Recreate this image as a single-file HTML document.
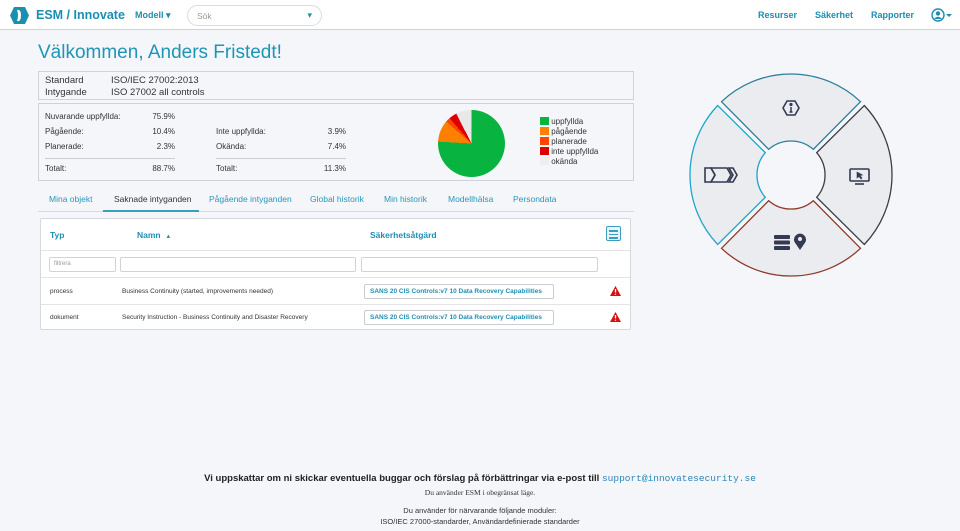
<!DOCTYPE html>
<html><head><meta charset="utf-8"><style>
*{box-sizing:border-box;margin:0;padding:0}
body{width:960px;height:531px;overflow:hidden;background:#f5f6fa;font-family:"Liberation Sans",sans-serif;color:#333;position:relative}
.abs{position:absolute}
.hdr{position:absolute;left:0;top:0;width:960px;height:30px;background:#fff;border-bottom:1px solid #cfd2d8}
.teal{color:#1a8fb0}
.box{position:absolute;border:1px solid #cfd2d8;background:#f5f6fa}
.s{font-size:8px;color:#333}
.tab{position:absolute;top:194px;font-size:8.5px;color:#2a96b8}
.card{position:absolute;left:40px;top:218px;width:591px;height:112px;background:#fff;border:1px solid #d6d9de;border-radius:2px}
.row{position:absolute;left:0;width:100%;border-top:1px solid #e2e4e8}
.in{position:absolute;height:15px;border:1px solid #d0d3d8;border-radius:2px;background:#fff}
.btn{position:absolute;left:323px;width:190px;height:15px;border:1px solid #c9cdd3;border-radius:2px;font-size:6.5px;font-weight:bold;color:#1f8fb2;line-height:13px;padding-left:5px}
.warn{position:absolute;left:569px;width:11px;height:10px}
</style></head><body>
<div class="hdr">
  <svg class="abs" style="left:10px;top:7px" width="19" height="17" viewBox="0 0 19 17"><path d="M4 0 H15 L19 8.5 L15 17 H4 L0 8.5 Z" fill="#1a8fb0"/><path d="M7 3 Q11 2 11 8.5 Q11 15 7 14 Q9 8.5 7 3Z" fill="#fff"/></svg>
  <div class="abs teal" style="left:36px;top:8px;font-size:12.5px;font-weight:bold">ESM / Innovate</div>
  <div class="abs teal" style="left:135px;top:10px;font-size:9px;font-weight:bold">Modell ▾</div>
  <div class="abs" style="left:187px;top:5px;width:135px;height:21px;border:1px solid #d9dce0;border-radius:11px;background:#fff"><span style="position:absolute;left:9px;top:5px;font-size:8.5px;color:#999">Sök</span><span style="position:absolute;right:9px;top:4px;font-size:9px;color:#1a8fb0">▾</span></div>
  <div class="abs teal" style="left:758px;top:10px;font-size:9px;font-weight:bold">Resurser</div>
  <div class="abs teal" style="left:815px;top:10px;font-size:9px;font-weight:bold">Säkerhet</div>
  <div class="abs teal" style="left:871px;top:10px;font-size:9px;font-weight:bold">Rapporter</div>
  <svg class="abs" style="left:931px;top:8px" width="22" height="14" viewBox="0 0 22 14"><circle cx="7" cy="7" r="6" fill="none" stroke="#1a8fb0" stroke-width="1.4"/><circle cx="7" cy="5.5" r="2.2" fill="#1a8fb0"/><path d="M3 11 Q7 6.5 11 11" fill="#1a8fb0"/><path d="M15 6 H21 L18 9Z" fill="#1a8fb0"/></svg>
</div>
<div class="abs" style="left:38px;top:42px;font-size:19px;color:#1d96b5">Välkommen, Anders Fristedt!</div>
<div class="box" style="left:38px;top:71px;width:596px;height:29px">
  <div class="abs" style="left:6px;top:3px;font-size:9.5px;line-height:11.5px">Standard<br>Intygande</div>
  <div class="abs" style="left:72px;top:3px;font-size:9.5px;line-height:11.5px">ISO/IEC 27002:2013<br>ISO 27002 all controls</div>
</div>
<div class="box" style="left:38px;top:103px;width:596px;height:78px">
  <div class="abs s" style="left:6px;top:8px">Nuvarande uppfyllda:</div><div class="abs s" style="left:108px;top:8px;width:28px;text-align:right">75.9%</div>
  <div class="abs s" style="left:6px;top:23px">Pågående:</div><div class="abs s" style="left:108px;top:23px;width:28px;text-align:right">10.4%</div>
  <div class="abs s" style="left:6px;top:38px">Planerade:</div><div class="abs s" style="left:108px;top:38px;width:28px;text-align:right">2.3%</div>
  <div class="abs" style="left:6px;top:54px;width:130px;border-top:1px solid #ccc"></div>
  <div class="abs s" style="left:6px;top:60px">Totalt:</div><div class="abs s" style="left:108px;top:60px;width:28px;text-align:right">88.7%</div>
  <div class="abs s" style="left:177px;top:23px">Inte uppfyllda:</div><div class="abs s" style="left:265px;top:23px;width:42px;text-align:right">3.9%</div>
  <div class="abs s" style="left:177px;top:38px">Okända:</div><div class="abs s" style="left:265px;top:38px;width:42px;text-align:right">7.4%</div>
  <div class="abs" style="left:177px;top:54px;width:130px;border-top:1px solid #ccc"></div>
  <div class="abs s" style="left:177px;top:60px">Totalt:</div><div class="abs s" style="left:265px;top:60px;width:42px;text-align:right">11.3%</div>
  <div class="abs" style="left:399px;top:6px;width:67px;height:67px;border-radius:50%;background:conic-gradient(#08b43f 0 75.9%,#ff8000 75.9% 86.3%,#ff4500 86.3% 88.6%,#dd0000 88.6% 92.5%,#e8e8e8 92.5% 100%)"></div>
  <div class="abs" style="left:501px;top:13px;font-size:8px;line-height:10px">
    <div><span style="display:inline-block;width:9px;height:8px;background:#08b43f;vertical-align:-1px"></span> uppfyllda</div>
    <div><span style="display:inline-block;width:9px;height:8px;background:#ff8000;vertical-align:-1px"></span> pågående</div>
    <div><span style="display:inline-block;width:9px;height:8px;background:#ff4500;vertical-align:-1px"></span> planerade</div>
    <div><span style="display:inline-block;width:9px;height:8px;background:#dd0000;vertical-align:-1px"></span> inte uppfyllda</div>
    <div><span style="display:inline-block;width:9px;height:8px;background:#eee;vertical-align:-1px"></span> okända</div>
  </div>
</div>
<div class="tab" style="left:49px">Mina objekt</div>
<div class="tab" style="left:114px;color:#333">Saknade intyganden</div>
<div class="tab" style="left:209px">Pågående intyganden</div>
<div class="tab" style="left:310px">Global historik</div>
<div class="tab" style="left:384px">Min historik</div>
<div class="tab" style="left:448px">Modellhälsa</div>
<div class="tab" style="left:513px">Persondata</div>
<div class="abs" style="left:38px;top:211px;width:596px;border-top:1px solid #d6d9de"></div>
<div class="abs" style="left:103px;top:210px;width:96px;height:2px;background:#3a9fbf"></div>
<div class="card">
  <div class="abs" style="left:9px;top:11px;font-size:8.5px;font-weight:bold;color:#1f8fb2">Typ</div>
  <div class="abs" style="left:96px;top:11px;font-size:8.5px;font-weight:bold;color:#1f8fb2">Namn &nbsp;<span style="font-size:6px">▲</span></div>
  <div class="abs" style="left:329px;top:11px;font-size:8.5px;font-weight:bold;color:#1f8fb2">Säkerhetsåtgärd</div>
  <div class="abs" style="left:565px;top:7px;width:15px;height:15px;border:1.5px solid #3a9fbf;border-radius:2px;background:#eaf5fa">
    <div style="margin:3px 2px 0;height:1.5px;background:#3a9fbf"></div><div style="margin:2px 2px 0;height:1.5px;background:#3a9fbf"></div><div style="margin:2px 2px 0;height:1.5px;background:#3a9fbf"></div>
  </div>
  <div class="row" style="top:31px;height:28px">
    <div class="in" style="left:8px;top:6px;width:67px;font-size:6px;color:#999;padding:3px 4px">filtrera</div>
    <div class="in" style="left:79px;top:6px;width:236px"></div>
    <div class="in" style="left:320px;top:6px;width:237px"></div>
  </div>
  <div class="row" style="top:58px;height:27px">
    <div class="abs" style="left:9px;top:10px;font-size:6.5px">process</div>
    <div class="abs" style="left:81px;top:10px;font-size:6.5px">Business Continuity (started, improvements needed)</div>
    <div class="btn" style="top:6px">SANS 20 CIS Controls:v7 10 Data Recovery Capabilities</div>
    <svg class="warn" style="top:8px" viewBox="0 0 11 10"><path d="M5.5 0 L11 10 H0Z" fill="#d41010"/><path d="M5.5 3 V6.5 M5.5 7.8 V8.8" stroke="#fff" stroke-width="1.3"/></svg>
  </div>
  <div class="row" style="top:85px;height:27px">
    <div class="abs" style="left:9px;top:9px;font-size:6.5px">dokument</div>
    <div class="abs" style="left:81px;top:9px;font-size:6.5px">Security Instruction - Business Continuity and Disaster Recovery</div>
    <div class="btn" style="top:5px">SANS 20 CIS Controls:v7 10 Data Recovery Capabilities</div>
    <svg class="warn" style="top:7px" viewBox="0 0 11 10"><path d="M5.5 0 L11 10 H0Z" fill="#d41010"/><path d="M5.5 3 V6.5 M5.5 7.8 V8.8" stroke="#fff" stroke-width="1.3"/></svg>
  </div>
</div>
<svg class="abs" style="left:680px;top:64px" width="222" height="222" viewBox="-111 -111 222 222">
  <g fill="#ebecef" stroke-width="1.3">
    <path d="M-69.5,-73.3 A101,101 0 0 1 69.5,-73.3 L22.3,-25.7 A34,34 0 0 0 -22.3,-25.7 Z" stroke="#2b7e99"/>
    <path transform="rotate(90)" d="M-69.5,-73.3 A101,101 0 0 1 69.5,-73.3 L22.3,-25.7 A34,34 0 0 0 -22.3,-25.7 Z" stroke="#3a3d42"/>
    <path transform="rotate(180)" d="M-69.5,-73.3 A101,101 0 0 1 69.5,-73.3 L22.3,-25.7 A34,34 0 0 0 -22.3,-25.7 Z" stroke="#8e3b28"/>
    <path transform="rotate(270)" d="M-69.5,-73.3 A101,101 0 0 1 69.5,-73.3 L22.3,-25.7 A34,34 0 0 0 -22.3,-25.7 Z" stroke="#1ea6cc"/>
  </g>
  <g stroke="#333a52" fill="none" stroke-width="1.6">
    <path d="M-4,-74 L4,-74 L8,-67 L4,-60 L-4,-60 L-8,-67 Z"/>
    <path d="M0,-68 V-63 M-1.5,-63 H1.5" stroke-width="1.5"/>
    <circle cx="0" cy="-70.5" r="0.8" fill="#333a52"/>
    <rect x="59" y="-6" width="19" height="12" rx="1"/>
    <path d="M64,9 H73" />
    <path d="M66,-3 L66,3 L68,1.5 L70,4 L71,3 L69,0.5 L71.5,0 Z" fill="#333a52" stroke-width="0.6"/>
    <path d="M-86,-7 H-80 L-76,0 L-80,7 H-86 Z"/>
    <path d="M-80,-7 H-64 L-60,0 L-64,7 H-80 L-76,0 Z"/>
    <path d="M-62,-7 H-58 L-54,0 L-58,7 H-62 L-58,0 Z"/>
  </g>
  <g fill="#333a52">
    <rect x="-17" y="60" width="16" height="4" rx="1"/>
    <rect x="-17" y="65.5" width="16" height="4" rx="1"/>
    <rect x="-17" y="71" width="16" height="4" rx="1"/>
    <path d="M9,75 L3.5,67 A6,6 0 1 1 14.5,67 Z"/>
    <circle cx="9" cy="64" r="2" fill="#ebecef"/>
  </g>
</svg>
<div class="abs" style="left:0;top:473px;width:960px;text-align:center;font-size:9.5px;font-weight:bold;color:#222">Vi uppskattar om ni skickar eventuella buggar och förslag på förbättringar via e-post till <span style="font-family:'Liberation Mono',monospace;font-weight:normal;color:#2a86b8">support@innovatesecurity.se</span></div>
<div class="abs" style="left:0;top:488px;width:960px;text-align:center;font-size:7.5px;font-family:'Liberation Serif',serif;color:#333">Du använder ESM i obegränsat läge.</div>
<div class="abs" style="left:0;top:505px;width:960px;text-align:center;font-size:7.5px;line-height:11px;color:#333">Du använder för närvarande följande moduler:<br>ISO/IEC 27000-standarder, Användardefinierade standarder</div>
</body></html>
